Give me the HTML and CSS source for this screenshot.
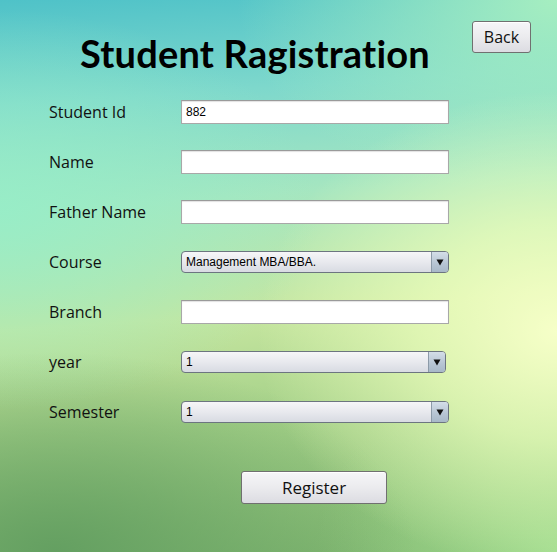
FILE: index.html
```html
<!DOCTYPE html>
<html lang="en">
<head>
<meta charset="utf-8">
<title>Student Ragistration</title>
<link rel="stylesheet" href="styles.css">
</head>
<body>
<main class="window">
  <header class="top">
    <h1 class="title">Student Ragistration</h1>
    <button class="btn back" type="button">Back</button>
  </header>
  <form class="form">
    <label class="label">Student Id</label>
    <div class="field"><span class="field-text">882</span></div>

    <label class="label">Name</label>
    <div class="field"></div>

    <label class="label">Father Name</label>
    <div class="field"></div>

    <label class="label">Course</label>
    <div class="combo"><span class="combo-value">Management MBA/BBA.</span><span class="combo-arrow"><svg width="8" height="7" viewBox="0 0 8 7"><path d="M0.5 0.5 H7.5 L4 6.5 Z" fill="#111"/></svg></span></div>

    <label class="label">Branch</label>
    <div class="field"></div>

    <label class="label">year</label>
    <div class="combo combo-narrow"><span class="combo-value">1</span><span class="combo-arrow"><svg width="8" height="7" viewBox="0 0 8 7"><path d="M0.5 0.5 H7.5 L4 6.5 Z" fill="#111"/></svg></span></div>

    <label class="label">Semester</label>
    <div class="combo"><span class="combo-value">1</span><span class="combo-arrow"><svg width="8" height="7" viewBox="0 0 8 7"><path d="M0.5 0.5 H7.5 L4 6.5 Z" fill="#111"/></svg></span></div>
  </form>
  <div class="actions">
    <button class="btn register" type="button">Register</button>
  </div>
</main>
</body>
</html>
```

FILE: styles.css
```css
html, body {
  margin: 0;
  padding: 0;
}

body {
  width: 557px;
  height: 552px;
  overflow: hidden;
  font-family: "Open Sans", "Liberation Sans", sans-serif;
}

.window {
  width: 557px;
  height: 552px;
  box-sizing: border-box;
  display: flex;
  flex-direction: column;
  background:
    radial-gradient(ellipse 300px 240px at 100% 60%, rgba(246, 255, 200, 1) 0%, rgba(238, 255, 190, 0.7) 45%, rgba(230, 250, 170, 0) 100%),
    radial-gradient(ellipse 320px 200px at 100% 0%, rgba(170, 240, 192, 0.95) 0%, rgba(170, 240, 192, 0) 100%),
    radial-gradient(ellipse 320px 200px at 0% 38%, rgba(150, 238, 200, 0.85) 0%, rgba(150, 238, 200, 0) 100%),
    radial-gradient(ellipse 360px 200px at 10% 100%, rgba(98, 158, 96, 0.95) 0%, rgba(98, 158, 96, 0) 100%),
    radial-gradient(ellipse 240px 200px at 100% 100%, rgba(164, 224, 146, 0.9) 0%, rgba(164, 224, 146, 0) 100%),
    linear-gradient(176deg, #4fc2c8 0%, #7ed8cc 18%, #a6e6c0 36%, #c6e6a0 56%, #a4d088 74%, #80b670 100%);
}

.top {
  display: flex;
  align-items: flex-start;
  padding: 21px 26px 0 80px;
}

.title {
  margin: 12px 0 0 0;
  font-family: "Lato", "Open Sans", sans-serif;
  font-weight: 700;
  font-size: 38px;
  line-height: 40px;
  color: #000;
  letter-spacing: 0.2px;
}

.btn {
  font-family: "Open Sans", "Liberation Sans", sans-serif;
  font-size: 16px;
  color: #111;
  border: 1px solid #707070;
  border-radius: 3px;
  background: linear-gradient(to bottom, #f6f6f8 0%, #ebebee 50%, #dcdce2 100%);
  box-shadow: inset 0 1px 0 #ffffff;
  padding: 0;
}

.back {
  margin-left: auto;
  width: 59px;
  height: 32px;
}

.form {
  display: grid;
  grid-template-columns: 132px 268px;
  grid-auto-rows: 24px;
  row-gap: 26px;
  align-items: center;
  padding: 0 0 0 49px;
  margin-top: 27px;
}

.label {
  font-size: 16px;
  color: #111;
  line-height: 24px;
}

.field {
  box-sizing: border-box;
  height: 24px;
  background: #fff;
  border: 1px solid #a8a8a8;
  border-top-color: #9a9a9a;
  box-shadow: inset 0 1px 1px rgba(0, 0, 0, 0.12);
  display: flex;
  align-items: center;
  padding-left: 4px;
}

.field-text {
  font-family: "Liberation Sans", Arial, sans-serif;
  font-size: 12px;
  color: #000;
}

.combo {
  box-sizing: border-box;
  height: 22px;
  border: 1px solid #6c7580;
  border-radius: 4px;
  background: linear-gradient(to bottom, #f6f6f8 0%, #e8e9ee 50%, #d8dbe2 100%);
  display: flex;
  align-items: stretch;
  overflow: hidden;
}

.combo-narrow {
  width: 265px;
}

.combo-value {
  flex: 1;
  display: flex;
  align-items: center;
  padding-left: 4px;
  font-family: "Liberation Sans", Arial, sans-serif;
  font-size: 12px;
  color: #000;
}

.combo-arrow {
  width: 16px;
  display: flex;
  align-items: center;
  justify-content: center;
  border-left: 1px solid #8c9aa8;
  background: linear-gradient(to bottom, #d4dee8 0%, #b8c6d4 55%, #a8b8c8 100%);
}

.actions {
  display: flex;
  padding-left: 241px;
  margin-top: 47px;
}

.register {
  width: 146px;
  height: 33px;
  font-size: 17px;
}
```
